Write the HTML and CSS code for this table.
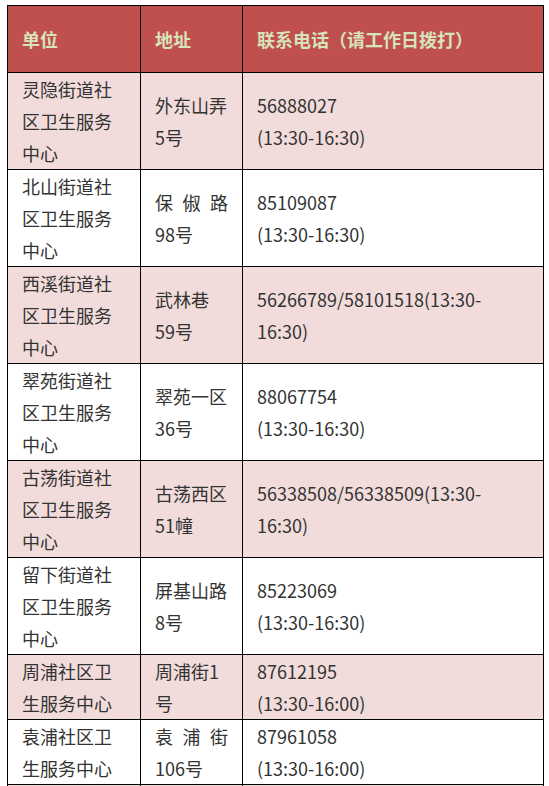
FILE: index.html
```html
<!DOCTYPE html>
<html lang="zh-CN">
<head>
<meta charset="utf-8">
<title>社区卫生服务中心</title>
<link rel="stylesheet" href="styles.css">
</head>
<body>
<div class="wrap">
<table class="tbl">
<colgroup><col class="c1"><col class="c2"><col class="c3"></colgroup>
<thead>
<tr><th>单位</th><th>地址</th><th>联系电话（请工作日拨打）</th></tr>
</thead>
<tbody>
<tr class="pink"><td>灵隐街道社区卫生服务中心</td><td>外东山弄5号</td><td>56888027<br>(13:30-16:30)</td></tr>
<tr><td>北山街道社区卫生服务中心</td><td class="just">保俶路98号</td><td>85109087<br>(13:30-16:30)</td></tr>
<tr class="pink"><td>西溪街道社区卫生服务中心</td><td>武林巷<br>59号</td><td>56266789/58101518(13:30-16:30)</td></tr>
<tr><td>翠苑街道社区卫生服务中心</td><td>翠苑一区<br>36号</td><td>88067754<br>(13:30-16:30)</td></tr>
<tr class="pink"><td>古荡街道社区卫生服务中心</td><td>古荡西区<br>51幢</td><td>56338508/56338509(13:30-16:30)</td></tr>
<tr><td>留下街道社区卫生服务中心</td><td>屏基山路<br>8号</td><td>85223069<br>(13:30-16:30)</td></tr>
<tr class="pink"><td>周浦社区卫生服务中心</td><td>周浦街1<br>号</td><td>87612195<br>(13:30-16:00)</td></tr>
<tr><td>袁浦社区卫生服务中心</td><td class="just">袁浦街106号</td><td>87961058<br>(13:30-16:00)</td></tr>
<tr class="pink"><td>&nbsp;</td><td>&nbsp;</td><td>&nbsp;</td></tr>
</tbody>
</table>
</div>
</body>
</html>
```

FILE: styles.css
```css
html, body {
  margin: 0;
  padding: 0;
  background: #ffffff;
}
body {
  font-family: "Noto Sans CJK SC", "Noto Sans", sans-serif;
  color: #333333;
}
.wrap {
  padding: 5px 0 0 7px;
}
.tbl {
  border-collapse: collapse;
  table-layout: fixed;
  width: 536px;
}
.c1 { width: 133px; }
.c2 { width: 102px; }
.c3 { width: 301px; }
.tbl th,
.tbl td {
  border: 1px solid #000000;
  padding: 0 14px;
  font-size: 18px;
  line-height: 32px;
  vertical-align: middle;
  text-align: left;
  word-break: normal;
}
.tbl th {
  background: #c0504d;
  color: #d6e3bc;
  font-weight: bold;
  padding-top: 17px;
  padding-bottom: 17px;
}
.tbl td.just {
  text-align: justify;
}
.tbl tr.pink td {
  background: #f2dcdb;
}
```
